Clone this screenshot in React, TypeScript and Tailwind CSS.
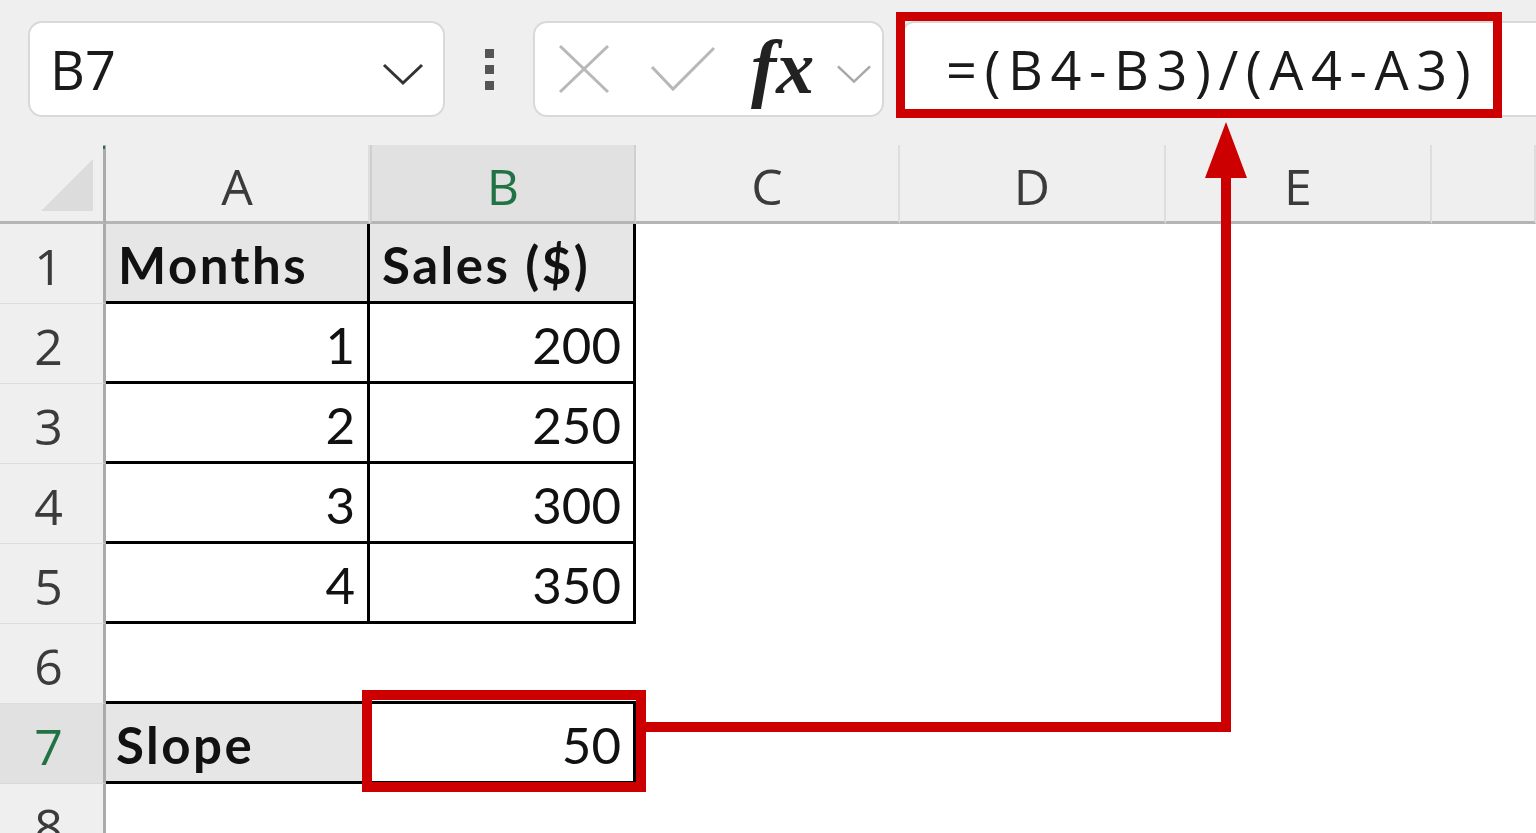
import React from "react";

const CELL_FONT = { fontFamily: "Lato, 'Liberation Sans', sans-serif" };
const UI_FONT = { fontFamily: "'Open Sans', 'Noto Sans', sans-serif" };

const rows = [
  { n: 1, a: "Months", b: "Sales ($)" },
  { n: 2, a: "1", b: "200" },
  { n: 3, a: "2", b: "250" },
  { n: 4, a: "3", b: "300" },
  { n: 5, a: "4", b: "350" },
  { n: 6, a: "", b: "" },
  { n: 7, a: "Slope", b: "50" },
  { n: 8, a: "", b: "" },
];

function Chevron({ className }: { className: string }) {
  return (
    <svg viewBox="0 0 44 26" className={className} fill="none">
      <polyline points="3,4 22,22 41,4" stroke="currentColor" strokeWidth="3" />
    </svg>
  );
}

function cellClass(n: number, col: "a" | "b") {
  if (n === 1) return "bg-[#e6e6e6] font-bold tracking-[2.5px] justify-start pl-[12px] border-r-[3px] border-b-[3px] border-black";
  if (n >= 2 && n <= 5) return "bg-white justify-end pr-[12px] border-r-[3px] border-b-[3px] border-black";
  if (n === 6) return "bg-white border-b-[3px] border-black";
  if (n === 7 && col === "a") return "bg-[#e6e6e6] font-bold tracking-[2.5px] justify-start pl-[10px] border-r-[3px] border-b-[3px] border-black";
  if (n === 7) return "bg-white justify-end pr-[12px] border-r-[3px] border-b-[3px] border-black";
  return "bg-white";
}

export default function App() {
  return (
    <div className="relative w-[1536px] h-[833px] overflow-hidden bg-white text-[#111]">
      {/* formula bar */}
      <div className="h-[145px] bg-[#efefef] flex items-start pt-[21px]" style={UI_FONT}>
        <div className="ml-[28px] w-[417px] h-[96px] rounded-[14px] border-2 border-[#d9d9d9] bg-white flex items-center justify-between pl-[20px] pr-[18px]">
          <span className="text-[54px] leading-none text-[#1a1a1a]">B7</span>
          <Chevron className="w-[44px] h-[26px] mt-[10px] text-[#333]" />
        </div>
        <div className="ml-[40px] mr-[39px] h-[96px] flex flex-col justify-center gap-[7px]">
          <div className="w-[9px] h-[9px] bg-[#555]" />
          <div className="w-[9px] h-[9px] bg-[#555]" />
          <div className="w-[9px] h-[9px] bg-[#555]" />
        </div>
        <div className="w-[351px] h-[96px] rounded-[14px] border-2 border-[#d9d9d9] bg-white flex items-center pl-[22px]">
          <svg viewBox="0 0 54 52" className="w-[54px] h-[52px]" fill="none">
            <line x1="3" y1="3" x2="51" y2="49" stroke="#b8b8b8" strokeWidth="3" />
            <line x1="51" y1="3" x2="3" y2="49" stroke="#b8b8b8" strokeWidth="3" />
          </svg>
          <svg viewBox="0 0 68 48" className="ml-[38px] w-[68px] h-[48px]" fill="none">
            <polyline points="3,22 24,44 65,3" stroke="#b8b8b8" strokeWidth="3" />
          </svg>
          <span
            className="ml-[34px] text-[76px] leading-none italic font-bold text-[#222] -mt-[4px]"
            style={{ fontFamily: "'Liberation Serif', serif" }}
          >
            fx
          </span>
          <Chevron className="ml-[20px] w-[40px] h-[22px] mt-[10px] text-[#a8a8a8]" />
        </div>
        <div className="ml-[18px] flex-1 h-[96px] rounded-l-[12px] border-2 border-r-0 border-[#d9d9d9] bg-white flex items-center pl-[42px]">
          <span className="text-[54px] leading-none tracking-[7.6px] text-[#1a1a1a]">=(B4-B3)/(A4-A3)</span>
        </div>
      </div>

      {/* sheet */}
      <div className="grid grid-cols-[106px_264px_266px_264px_266px_266px_1fr] grid-rows-[79px_repeat(8,80px)]">
        <div className="relative bg-[#efefef] border-r-[3px] border-b-[3px] border-r-[#ababab] border-b-[#b5b5b5]">
          <svg viewBox="0 0 52 52" className="absolute right-[10px] bottom-[10px] w-[52px] h-[52px]">
            <polygon points="52,0 52,52 0,52" fill="#dcdcdc" />
          </svg>
          <div className="absolute right-[-2px] top-[1px] w-[2px] h-[3px] bg-[#217346]" />
        </div>
        {["A", "B", "C", "D", "E", ""].map((c) => (
          <div
            key={c || "F"}
            className={
              c === "B"
                ? "bg-[#e1e1e1] border-b-[3px] border-b-[#b5b5b5] border-x-2 border-x-[#cfcfcf] flex items-center justify-center pt-[6px] text-[50px] leading-none text-[#217346]"
                : "bg-[#efefef] border-b-[3px] border-b-[#b5b5b5] border-r-2 border-r-[#dedede] flex items-center justify-center pt-[6px] text-[50px] leading-none text-[#3b3b3b]"
            }
            style={UI_FONT}
          >
            {c}
          </div>
        ))}

        {rows.map((r) => (
          <React.Fragment key={r.n}>
            <div
              className={
                r.n === 7
                  ? "bg-[#e1e1e1] border-r-[3px] border-r-[#ababab] border-b border-b-[#d8d8d8] flex items-center justify-center pt-[4px] pr-[6px] text-[50px] leading-none text-[#217346]"
                  : "bg-[#efefef] border-r-[3px] border-r-[#ababab] border-b border-b-[#dcdcdc] flex items-center justify-center pt-[4px] pr-[6px] text-[50px] leading-none text-[#3b3b3b]"
              }
              style={UI_FONT}
            >
              {r.n}
            </div>
            <div className={`flex items-center pt-[4px] text-[51px] leading-none ${cellClass(r.n, "a")}`} style={CELL_FONT}>
              {r.a}
            </div>
            <div className={`flex items-center pt-[4px] text-[51px] leading-none ${cellClass(r.n, "b")}`} style={CELL_FONT}>
              {r.b}
            </div>
            <div className="bg-white" />
            <div className="bg-white" />
            <div className="bg-white" />
            <div className="bg-white" />
          </React.Fragment>
        ))}
      </div>

      {/* annotation */}
      <svg className="absolute inset-0 w-[1536px] h-[833px] pointer-events-none" viewBox="0 0 1536 833" fill="none">
        <rect x="900.5" y="16.5" width="597" height="97" stroke="#cc0000" strokeWidth="9" />
        <rect x="367" y="695" width="274" height="92" stroke="#cc0000" strokeWidth="10" />
        <polyline points="646,727 1226,727 1226,176" stroke="#cc0000" strokeWidth="10" />
        <polygon points="1205,178 1247,178 1226,122" fill="#cc0000" />
      </svg>
    </div>
  );
}
